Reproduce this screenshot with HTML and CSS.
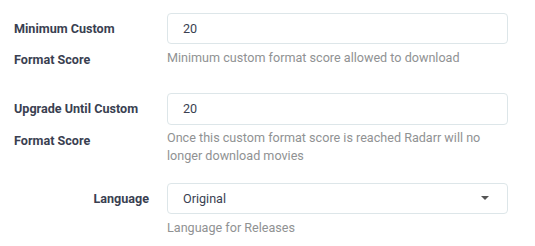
FILE: index.html
```html
<!DOCTYPE html>
<html lang="en">
<head>
<meta charset="utf-8"/>
<title>Profile settings</title>
<link rel="stylesheet" href="styles.css">
</head>
<body>
<div class="form">
  <div class="group">
    <label class="label">Minimum Custom Format Score</label>
    <div class="field">
      <input class="input" type="text" value="20"/>
      <div class="help">Minimum custom format score allowed to download</div>
    </div>
  </div>
  <div class="group">
    <label class="label">Upgrade Until Custom Format Score</label>
    <div class="field">
      <input class="input" type="text" value="20"/>
      <div class="help">Once this custom format score is reached Radarr will no longer download movies</div>
    </div>
  </div>
  <div class="group">
    <label class="label">Language</label>
    <div class="field">
      <div class="input select">
        <span>Original</span>
        <span class="caret"></span>
      </div>
      <div class="help">Language for Releases</div>
    </div>
  </div>
</div>
</body>
</html>
```
FILE: styles.css
```css
body {
    margin: 0;
    background-color: #ffffff;
    font-family: Roboto, "Liberation Sans", sans-serif;
    color: #3a3f51;
}
.form {
    padding: 12.5px 27px 0 14px;
}
.group {
    display: flex;
    margin-bottom: 17.5px;
}
.label {
    display: flex;
    justify-content: flex-end;
    flex: 0 0 135px;
    margin-right: 18px;
    font-size: 12.6px;
    font-weight: bold;
    line-height: 31.5px;
    color: #3a3f51;
}
.field {
    flex: 1 1 auto;
}
.input {
    display: block;
    box-sizing: border-box;
    width: 100%;
    height: 31.5px;
    padding: 0 15px;
    border: 1px solid #dde6e9;
    border-radius: 4px;
    font-family: Roboto, "Liberation Sans", sans-serif;
    font-size: 12.6px;
    color: #3a3f51;
    outline: none;
}
.select {
    display: flex;
    align-items: center;
    justify-content: space-between;
}
.caret {
    width: 0;
    height: 0;
    margin-right: 3px;
    border-left: 4px solid transparent;
    border-right: 4px solid transparent;
    border-top: 4px solid #555555;
}
.help {
    margin-top: 4.5px;
    font-size: 12.6px;
    line-height: 18px;
    color: #909293;
}
```
